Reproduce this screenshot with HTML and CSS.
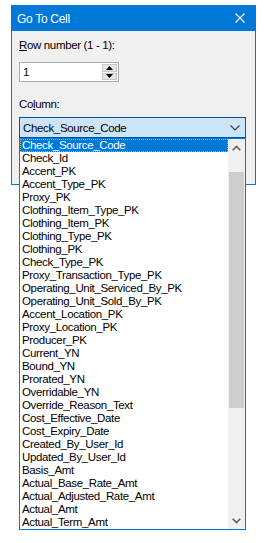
FILE: index.html
```html
<!DOCTYPE html>
<html lang="en">
<head>
    <meta charset="UTF-8">
    <title>Go To Cell</title>
    <link rel="stylesheet" href="styles.css">
</head>
<body>
    <div class="dialog">
        <div class="titlebar">
            <span class="title">Go To Cell</span>
            <svg class="close" width="10" height="10" viewBox="0 0 10 10">
                <path d="M0.5 0.5 L9.5 9.5 M9.5 0.5 L0.5 9.5" stroke="#fff" stroke-width="1.1" fill="none"/>
            </svg>
        </div>
        <div class="body">
            <div class="label"><u>R</u>ow number (1 - 1):</div>
            <div class="spin">
                <span class="spin-value">1</span>
                <div class="spin-buttons">
                    <div class="spin-btn"><svg width="7" height="4" viewBox="0 0 7 4"><path d="M3.5 0 L7 4 L0 4 Z" fill="#000"/></svg></div>
                    <div class="spin-btn"><svg width="7" height="4" viewBox="0 0 7 4"><path d="M0 0 L7 0 L3.5 4 Z" fill="#000"/></svg></div>
                </div>
            </div>
            <div class="label label-column">Co<u>l</u>umn:</div>
            <div class="combo-wrap">
                <div class="combo">
                    <span>Check_Source_Code</span>
                    <svg class="chevron" width="10" height="6" viewBox="0 0 10 6">
                        <path d="M0.5 0.5 L5 5 L9.5 0.5" stroke="#404040" stroke-width="1.2" fill="none"/>
                    </svg>
                </div>
                <div class="dropdown">
                    <ul class="items">
                        <li class="selected">Check_Source_Code</li>
                        <li>Check_Id</li>
                        <li>Accent_PK</li>
                        <li>Accent_Type_PK</li>
                        <li>Proxy_PK</li>
                        <li>Clothing_Item_Type_PK</li>
                        <li>Clothing_Item_PK</li>
                        <li>Clothing_Type_PK</li>
                        <li>Clothing_PK</li>
                        <li>Check_Type_PK</li>
                        <li>Proxy_Transaction_Type_PK</li>
                        <li>Operating_Unit_Serviced_By_PK</li>
                        <li>Operating_Unit_Sold_By_PK</li>
                        <li>Accent_Location_PK</li>
                        <li>Proxy_Location_PK</li>
                        <li>Producer_PK</li>
                        <li>Current_YN</li>
                        <li>Bound_YN</li>
                        <li>Prorated_YN</li>
                        <li>Overridable_YN</li>
                        <li>Override_Reason_Text</li>
                        <li>Cost_Effective_Date</li>
                        <li>Cost_Expiry_Date</li>
                        <li>Created_By_User_Id</li>
                        <li>Updated_By_User_Id</li>
                        <li>Basis_Amt</li>
                        <li>Actual_Base_Rate_Amt</li>
                        <li>Actual_Adjusted_Rate_Amt</li>
                        <li>Actual_Amt</li>
                        <li>Actual_Term_Amt</li>
                    </ul>
                    <div class="scrollbar">
                        <div class="arrow">
                            <svg width="9" height="6" viewBox="0 0 9 6"><path d="M0.7 5.3 L4.5 1.5 L8.3 5.3" stroke="#606060" stroke-width="1.6" fill="none"/></svg>
                        </div>
                        <div class="track">
                            <div class="thumb"></div>
                        </div>
                        <div class="arrow">
                            <svg width="9" height="6" viewBox="0 0 9 6"><path d="M0.7 0.7 L4.5 4.5 L8.3 0.7" stroke="#606060" stroke-width="1.6" fill="none"/></svg>
                        </div>
                    </div>
                </div>
            </div>
        </div>
    </div>
</body>
</html>
```
FILE: styles.css
```css
:root {
    --accent: #0078d7;
    --face: #f0f0f0;
}
html, body {
    height: 100%;
}
body {
    margin: 0;
    min-height: 543px;
    background: #fff;
    font-family: "Segoe UI", "Liberation Sans", Arial, sans-serif;
    font-size: 11.5px;
    letter-spacing: -0.35px;
    color: #000;
}
.dialog {
    margin: 5px 0 0 11px;
    width: 245px;
    box-sizing: border-box;
    border: 1px solid var(--accent);
    border-top: none;
    background: var(--face);
}
.titlebar {
    height: 26px;
    background: var(--accent);
    color: #fff;
    display: flex;
    align-items: center;
    justify-content: space-between;
    padding: 0 10px 0 5px;
    font-size: 12px;
    letter-spacing: -0.3px;
}
.title {
    padding-top: 1px;
}
.body {
    height: 149px;
    padding: 4px 8px 0 7px;
}
.label {
    height: 15px;
    line-height: 15px;
    margin-top: 3px;
}
.label-column {
    margin-top: 15px;
}
.spin {
    margin-top: 9px;
    width: 100px;
    height: 20px;
    box-sizing: border-box;
    border: 1px solid #acacac;
    background: #fff;
    display: flex;
    justify-content: space-between;
}
.spin-value {
    padding-left: 3px;
    line-height: 18px;
}
.spin-buttons {
    width: 15px;
    display: flex;
    flex-direction: column;
    gap: 1px;
    padding: 1px 1px 1px 0;
}
.spin-btn {
    flex: 1;
    background: #e5e5e5;
    border: 1px solid #c8c8c8;
    display: flex;
    align-items: center;
    justify-content: center;
}
.combo-wrap {
    position: relative;
    margin-top: 5px;
    width: 227px;
}
.combo {
    height: 21px;
    box-sizing: border-box;
    border: 1px solid #005499;
    background: #cce4f7;
    display: flex;
    align-items: center;
    justify-content: space-between;
    padding: 0 5px 0 3px;
}
.chevron {
    margin-top: 1px;
}
.dropdown {
    position: absolute;
    top: 100%;
    left: 0;
    z-index: 2;
    width: 227px;
    height: 392px;
    box-sizing: border-box;
    border: 1px solid var(--accent);
    background: #fff;
    display: flex;
}
.items {
    list-style: none;
    margin: 0;
    padding: 0;
    flex: 1;
}
.items li {
    height: 13px;
    line-height: 13px;
    padding-left: 2px;
    white-space: nowrap;
}
.items li.selected {
    background: var(--accent);
    color: #fff;
    outline: 1px dotted #f0a040;
    outline-offset: -1px;
}
.scrollbar {
    width: 17px;
    background: var(--face);
    display: flex;
    flex-direction: column;
}
.arrow {
    height: 17px;
    display: flex;
    align-items: center;
    justify-content: center;
}
.track {
    flex: 1;
    padding-top: 16px;
}
.thumb {
    height: 236px;
    background: #cdcdcd;
    margin: 0 1px;
}
```
